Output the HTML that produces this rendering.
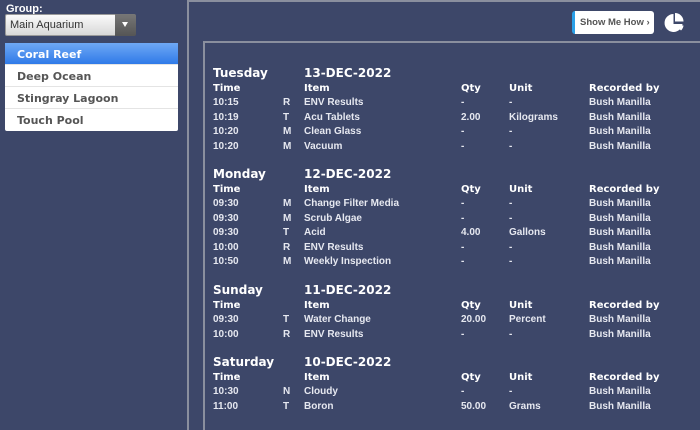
<!DOCTYPE html>
<html><head><meta charset="utf-8">
<style>
*{margin:0;padding:0;box-sizing:border-box}
body{width:700px;height:430px;background:#3d4769;position:relative;overflow:hidden;font-family:"Liberation Sans",Tahoma,sans-serif;color:#eef0f5}
.abs{position:absolute;white-space:nowrap}
.grp{left:6px;top:3px;font:bold 11px "Liberation Sans",sans-serif;color:#fff}
.sel{left:5px;top:14px;width:130px;height:22px;background:linear-gradient(#fafafa,#d8d8d8);border:1px solid #999;border-radius:2px;font-size:11px;color:#333;padding:4px 0 0 4px}
.selbtn{left:115px;top:14px;width:21px;height:22px;background:linear-gradient(#777,#555);border-radius:0 2px 2px 0}
.selbtn:after{content:"";position:absolute;left:7px;top:8px;border-left:3px solid transparent;border-right:3px solid transparent;border-top:5px solid #fff}
.list{left:5px;top:43px;width:173px;background:#fff;border-radius:2px}
.list div{height:22px;border-bottom:1px solid #e4e4e4;font:bold 11px "DejaVu Sans",Verdana,sans-serif;color:#555;padding:5px 0 0 12px}
.list div.on{background:linear-gradient(#6ea8f5,#2f7ae8);color:#fff}
.vl{left:187px;top:0;width:2px;height:430px;background:#8a8f9e}
.hl{left:187px;top:0;width:513px;height:2px;background:#8a8f9e}
.pl{left:203px;top:41px;width:2px;height:389px;background:#8a8f9e}
.pt{left:203px;top:41px;width:497px;height:2px;background:#8a8f9e}
.btn{left:572px;top:11px;width:82px;height:23px;background:#fff;border-radius:3px;border-left:3px solid #2aa0e8;font:bold 9.5px "Liberation Sans",sans-serif;color:#555;padding:6px 0 0 5px}
.day{font:bold 12px "DejaVu Sans",Verdana,sans-serif;color:#fff}
.hd{font:bold 10px "DejaVu Sans",Verdana,sans-serif;color:#fff}
.r{font:bold 10px "Liberation Sans",Tahoma,sans-serif;color:#e6e8f0}
</style></head><body>
<div class="abs grp">Group:</div>
<div class="abs sel">Main Aquarium</div>
<div class="abs selbtn"></div>
<div class="abs list"><div class="on">Coral Reef</div><div>Deep Ocean</div><div>Stingray Lagoon</div><div style="border:none">Touch Pool</div></div>
<div class="abs vl"></div><div class="abs hl"></div><div class="abs pl"></div><div class="abs pt"></div>
<div class="abs btn">Show Me How &#8250;</div>
<svg class="abs" style="left:664px;top:12px" width="22" height="22" viewBox="0 0 22 22">
<path d="M9.5 2 A9 9 0 1 0 18.5 12 L9.5 12 Z" fill="#fff"/>
<path d="M11 1 A8.5 8.5 0 0 1 19.5 9.5 L11 9.5 Z" fill="#fff"/>
<path d="M12 13.5 L19.5 13.5 A8 8 0 0 1 17 18.5 Z" fill="#fff"/>
</svg>
<div id="t"></div>
<script>
var d=[
[72,"Tuesday","13-DEC-2022",[["10:15","R","ENV Results","-","-"],["10:19","T","Acu Tablets","2.00","Kilograms"],["10:20","M","Clean Glass","-","-"],["10:20","M","Vacuum","-","-"]]],
[173,"Monday","12-DEC-2022",[["09:30","M","Change Filter Media","-","-"],["09:30","M","Scrub Algae","-","-"],["09:30","T","Acid","4.00","Gallons"],["10:00","R","ENV Results","-","-"],["10:50","M","Weekly Inspection","-","-"]]],
[289,"Sunday","11-DEC-2022",[["09:30","T","Water Change","20.00","Percent"],["10:00","R","ENV Results","-","-"]]],
[361,"Saturday","10-DEC-2022",[["10:30","N","Cloudy","-","-"],["11:00","T","Boron","50.00","Grams"]]]];
var h="",X=[213,283,304,461,509,589];
function p(c,x,y,s){return '<div class="abs '+c+'" style="left:'+x+'px;top:'+(y-4)+'px">'+s+'</div>';}
d.forEach(function(g){var y=g[0];
h+=p("day",213,y-2,g[1])+p("day",304,y-2,g[2]);y+=15;
["Time","","Item","Qty","Unit","Recorded by"].forEach(function(s,i){if(s)h+=p("hd",X[i],y,s)});
g[3].forEach(function(r){y+=14.4;r.concat(["Bush Manilla"]).forEach(function(s,i){h+=p("r",X[i],y,s)})});
});
document.getElementById("t").innerHTML=h;
</script>
</body></html>
